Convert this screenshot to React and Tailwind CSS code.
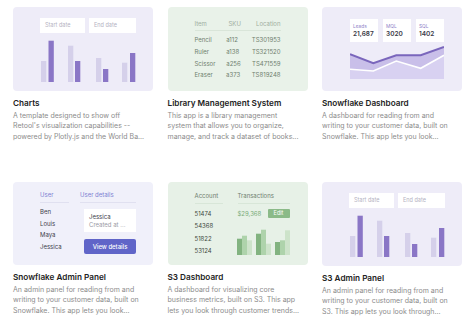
import React from "react";

const purpleBars = [
  [1, 21, "#d5d0ea"],
  [8.5, 41.3, "#8a76c6"],
  [28, 36.3, "#d5d0ea"],
  [35, 21, "#8a76c6"],
  [56, 24, "#d5d0ea"],
  [63, 13, "#8a76c6"],
  [82, 19.3, "#d5d0ea"],
  [90, 29, "#8a76c6"],
];

const greenBars = [
  [0, 16.3, "#82b380"],
  [5, 19.3, "#aed3ab"],
  [10, 14.7, "#cde3ca"],
  [19, 21.3, "#82b380"],
  [24, 25.3, "#aed3ab"],
  [29, 11.3, "#cde3ca"],
  [38, 13, "#82b380"],
  [43, 14.7, "#aed3ab"],
  [48, 24.7, "#cde3ca"],
];

function DateBarsPanel() {
  return (
    <div className="h-[84px] rounded-[4px] bg-[#eeecf8] pl-[27px] pt-[11px]">
      <div className="flex gap-[4px]">
        <div className="flex h-[15px] w-[45px] items-center bg-white pl-[5px] text-[5.5px] text-[#b4b2c2]">Start date</div>
        <div className="flex h-[15px] w-[47px] items-center bg-white pl-[5px] text-[5.5px] text-[#b4b2c2]">End date</div>
      </div>
      <svg width="96" height="42" className="mt-[7px] block">
        {purpleBars.map(([x, h, c], i) => (
          <rect key={i} x={x} y={42 - h} width="5.3" height={h} fill={c} />
        ))}
      </svg>
    </div>
  );
}

function LibraryPanel() {
  const rows = [
    ["Pencil", "a112", "TS301953"],
    ["Ruler", "a138", "TS321520"],
    ["Scissor", "a256", "TS471559"],
    ["Eraser", "a373", "TS819248"],
  ];
  return (
    <div className="h-[84px] rounded-[4px] bg-[#e9f2e9] px-[27px] pt-[11px] text-[6px]">
      <div className="flex h-[13px] items-center border-b border-[#d9e5d9] pb-[2px] text-[#9fae9f]">
        <div className="w-[37px]">Item</div>
        <div className="w-[30px]">SKU</div>
        <div>Location</div>
      </div>
      <div className="mt-[3px] text-[#6f806f]">
        {rows.map((r) => (
          <div key={r[0]} className="flex h-[11.7px] items-center">
            <div className="w-[37px]">{r[0]}</div>
            <div className="w-[30px]">{r[1]}</div>
            <div>{r[2]}</div>
          </div>
        ))}
      </div>
    </div>
  );
}

function Stat({ label, value }) {
  return (
    <div className="flex h-[23px] w-[28px] flex-col justify-center bg-white pl-[3px]">
      <div className="text-[4.8px] leading-[6px] text-[#8f84c8]">{label}</div>
      <div className="mt-[1px] text-[6.5px] font-semibold leading-[8px] text-[#3a3a48]">{value}</div>
    </div>
  );
}

function SnowflakeDashPanel() {
  return (
    <div className="h-[84px] rounded-[4px] bg-[#eeecf8] pl-[28px] pt-[12px]">
      <div className="flex gap-[5px]">
        <Stat label="Leads" value="21,687" />
        <Stat label="MQL" value="3020" />
        <Stat label="SQL" value="1402" />
      </div>
      <svg width="94" height="33" className="mt-[4px] block">
        <polygon points="0,8.3 23.3,17.3 46.3,9.3 70.7,9.3 94,1 94,33 0,33" fill="#c9bfe9" />
        <polygon points="0,23.3 23.3,25 46.3,15 70.7,22.3 94,9.3 94,33 0,33" fill="#d8d1f1" />
        <polyline points="0,23.3 23.3,25 46.3,15 70.7,22.3 94,9.3" fill="none" stroke="#fff" strokeWidth="1.6" />
        <polyline points="0,8.3 23.3,17.3 46.3,9.3 70.7,9.3 94,1" fill="none" stroke="#7a66bc" strokeWidth="2" />
      </svg>
    </div>
  );
}

function AdminPanel() {
  return (
    <div className="flex h-[83px] rounded-[4px] bg-[#f0f0fa] pl-[27px] pt-[9px] text-[6px]">
      <div className="w-[29px]">
        <div className="h-[8px] leading-[8px] text-[#7d80d2]">User</div>
        <div className="mt-[3px] border-b border-[#e0e0f0]" />
        <div className="mt-[3px] text-[#3d3d4a]">
          {["Ben", "Louis", "Maya", "Jessica"].map((n) => (
            <div key={n} className="h-[11.7px] leading-[11.7px]">{n}</div>
          ))}
        </div>
      </div>
      <div className="ml-[11px] w-[56px]">
        <div className="h-[8px] leading-[8px] text-[#7d80d2]">User details</div>
        <div className="mt-[3px] border-b border-[#e0e0f0]" />
        <div className="ml-[4px] mt-[6px] flex h-[23px] w-[52px] flex-col justify-center bg-white pl-[5px]">
          <div className="leading-[8px] text-[#3d3d4a]">Jessica</div>
          <div className="leading-[8px] text-[#9a9aa6]">Created at ...</div>
        </div>
        <div className="ml-[4px] mt-[7px] flex h-[15px] w-[52px] items-center justify-center rounded-[2px] bg-[#6065c8] text-[6px] font-medium text-white">
          View details
        </div>
      </div>
    </div>
  );
}

function S3DashPanel() {
  return (
    <div className="flex h-[83px] rounded-[4px] bg-[#e7f1e7] pl-[27px] pt-[10px] text-[6px]">
      <div className="w-[28px]">
        <div className="h-[8px] leading-[8px] text-[#6f806f]">Account</div>
        <div className="mt-[3px] border-b border-[#d8e6d8]" />
        <div className="mt-[4px] text-[#3f4a3f]">
          {["51474", "54368", "51822", "53124"].map((n) => (
            <div key={n} className="h-[12.3px] leading-[12.3px]">{n}</div>
          ))}
        </div>
      </div>
      <div className="ml-[15px] w-[52px]">
        <div className="h-[8px] leading-[8px] text-[#6f806f]">Transactions</div>
        <div className="mt-[3px] border-b border-[#d8e6d8]" />
        <div className="mt-[5px] flex items-center justify-between">
          <span className="text-[#7aac78]">$29,368</span>
          <span className="flex h-[9px] w-[22px] items-center justify-center rounded-[1px] bg-[#8bba88] text-[5.5px] text-white">Edit</span>
        </div>
        <svg width="53" height="26" className="ml-[-1px] mt-[11px] block">
          {greenBars.map(([x, h, c], i) => (
            <rect key={i} x={x} y={26 - h} width="5" height={h} fill={c} />
          ))}
        </svg>
      </div>
    </div>
  );
}

const cards = [
  {
    panel: <DateBarsPanel />,
    title: "Charts",
    lines: ["A template designed to show off", "Retool's visualization capabilities --", "powered by Plotly.js and the World Ba..."],
  },
  {
    panel: <LibraryPanel />,
    title: "Library Management System",
    lines: ["This app is a library management", "system that allows you to organize,", "manage, and track a dataset of books..."],
  },
  {
    panel: <SnowflakeDashPanel />,
    title: "Snowflake Dashboard",
    lines: ["A dashboard for reading from and", "writing to your customer data, built on", "Snowflake. This app lets you look..."],
  },
  {
    panel: <AdminPanel />,
    title: "Snowflake Admin Panel",
    lines: ["An admin panel for reading from and", "writing to your customer data, built on", "Snowflake. This app lets you look..."],
  },
  {
    panel: <S3DashPanel />,
    title: "S3 Dashboard",
    lines: ["A dashboard for visualizing core", "business metrics, built on S3. This app", "lets you look through customer trends..."],
  },
  {
    panel: <DateBarsPanel />,
    title: "S3 Admin Panel",
    lines: ["An admin panel for reading from and", "writing to your customer data, built on", "S3. This app lets you look through..."],
  },
];

export default function App() {
  return (
    <div className="h-[326px] w-[474px] overflow-hidden bg-white pl-[13px] pt-[7px] font-[Inter,'Noto_Sans',sans-serif]">
      <div className="grid grid-cols-[140px_140px_140px] gap-x-[14.5px] gap-y-[39px]">
        {cards.map((c) => (
          <div key={c.title} className="h-[136px]">
            {c.panel}
            <div className="mt-[6px] text-[8.2px] font-semibold leading-[12px] text-[#222]">{c.title}</div>
            <div className="mt-[1.5px] text-[7px] leading-[10.8px] text-[#8c8c8c]">
              {c.lines.map((l) => (
                <div key={l} className="whitespace-nowrap">{l}</div>
              ))}
            </div>
          </div>
        ))}
      </div>
    </div>
  );
}
